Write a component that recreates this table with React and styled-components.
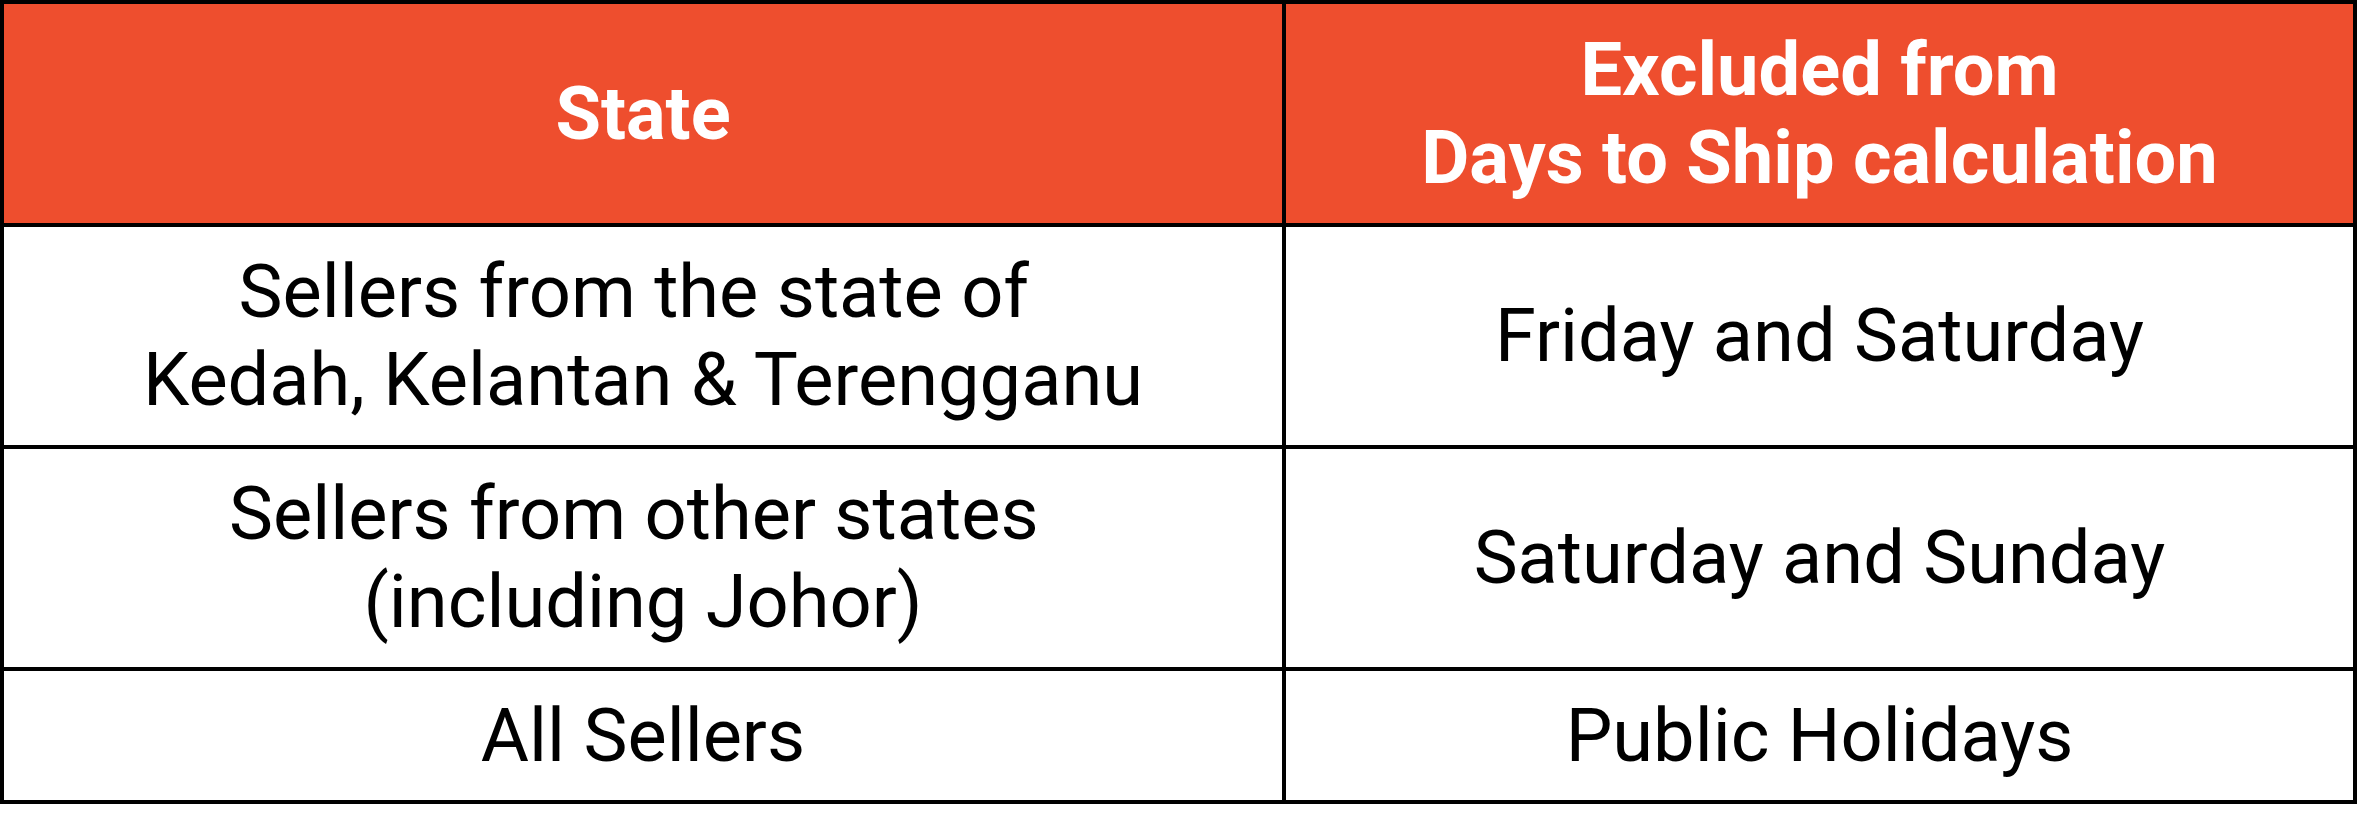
import React from "react";
import styled, { createGlobalStyle } from "styled-components";

const Global = createGlobalStyle`
  html, body { margin: 0; padding: 0; background: #ffffff; }
  body { font-family: Roboto, "Noto Sans", "Liberation Sans", sans-serif; }
`;

const Table = styled.div`
  display: grid;
  grid-template-columns: 1282px 1071px;
  grid-template-rows: 223px 222px 222px 133px;
  width: max-content;
  border-top: 4px solid #000;
  border-left: 4px solid #000;
  font-family: Roboto, "Noto Sans", "Liberation Sans", sans-serif;
`;

const Cell = styled.div`
  display: flex;
  align-items: center;
  justify-content: center;
  flex-direction: column;
  border-right: 4px solid #000;
  border-bottom: 4px solid #000;
  background: ${(p) => (p.$head ? "#EE4E2E" : "#ffffff")};
  color: ${(p) => (p.$head ? "#ffffff" : "#000000")};
  font-size: 74px;
  font-weight: ${(p) => (p.$head ? 700 : 400)};
  line-height: 88px;
  text-align: center;
`;

const Line = styled.span`
  display: block;
  white-space: pre;
`;

const rows = [
  { head: true, a: ["State"], b: ["Excluded from", "Days to Ship calculation"] },
  { a: ["Sellers from the state of ", "Kedah, Kelantan & Terengganu"], b: ["Friday and Saturday"] },
  { a: ["Sellers from other states ", "(including Johor)"], b: ["Saturday and Sunday"] },
  { a: ["All Sellers"], b: ["Public Holidays"] },
];

export default function App() {
  return (
    <>
      <Global />
      <Table>
        {rows.map((r, i) => (
          <React.Fragment key={i}>
            <Cell $head={r.head}>
              {r.a.map((t) => (
                <Line key={t}>{t}</Line>
              ))}
            </Cell>
            <Cell $head={r.head}>
              {r.b.map((t) => (
                <Line key={t}>{t}</Line>
              ))}
            </Cell>
          </React.Fragment>
        ))}
      </Table>
    </>
  );
}
